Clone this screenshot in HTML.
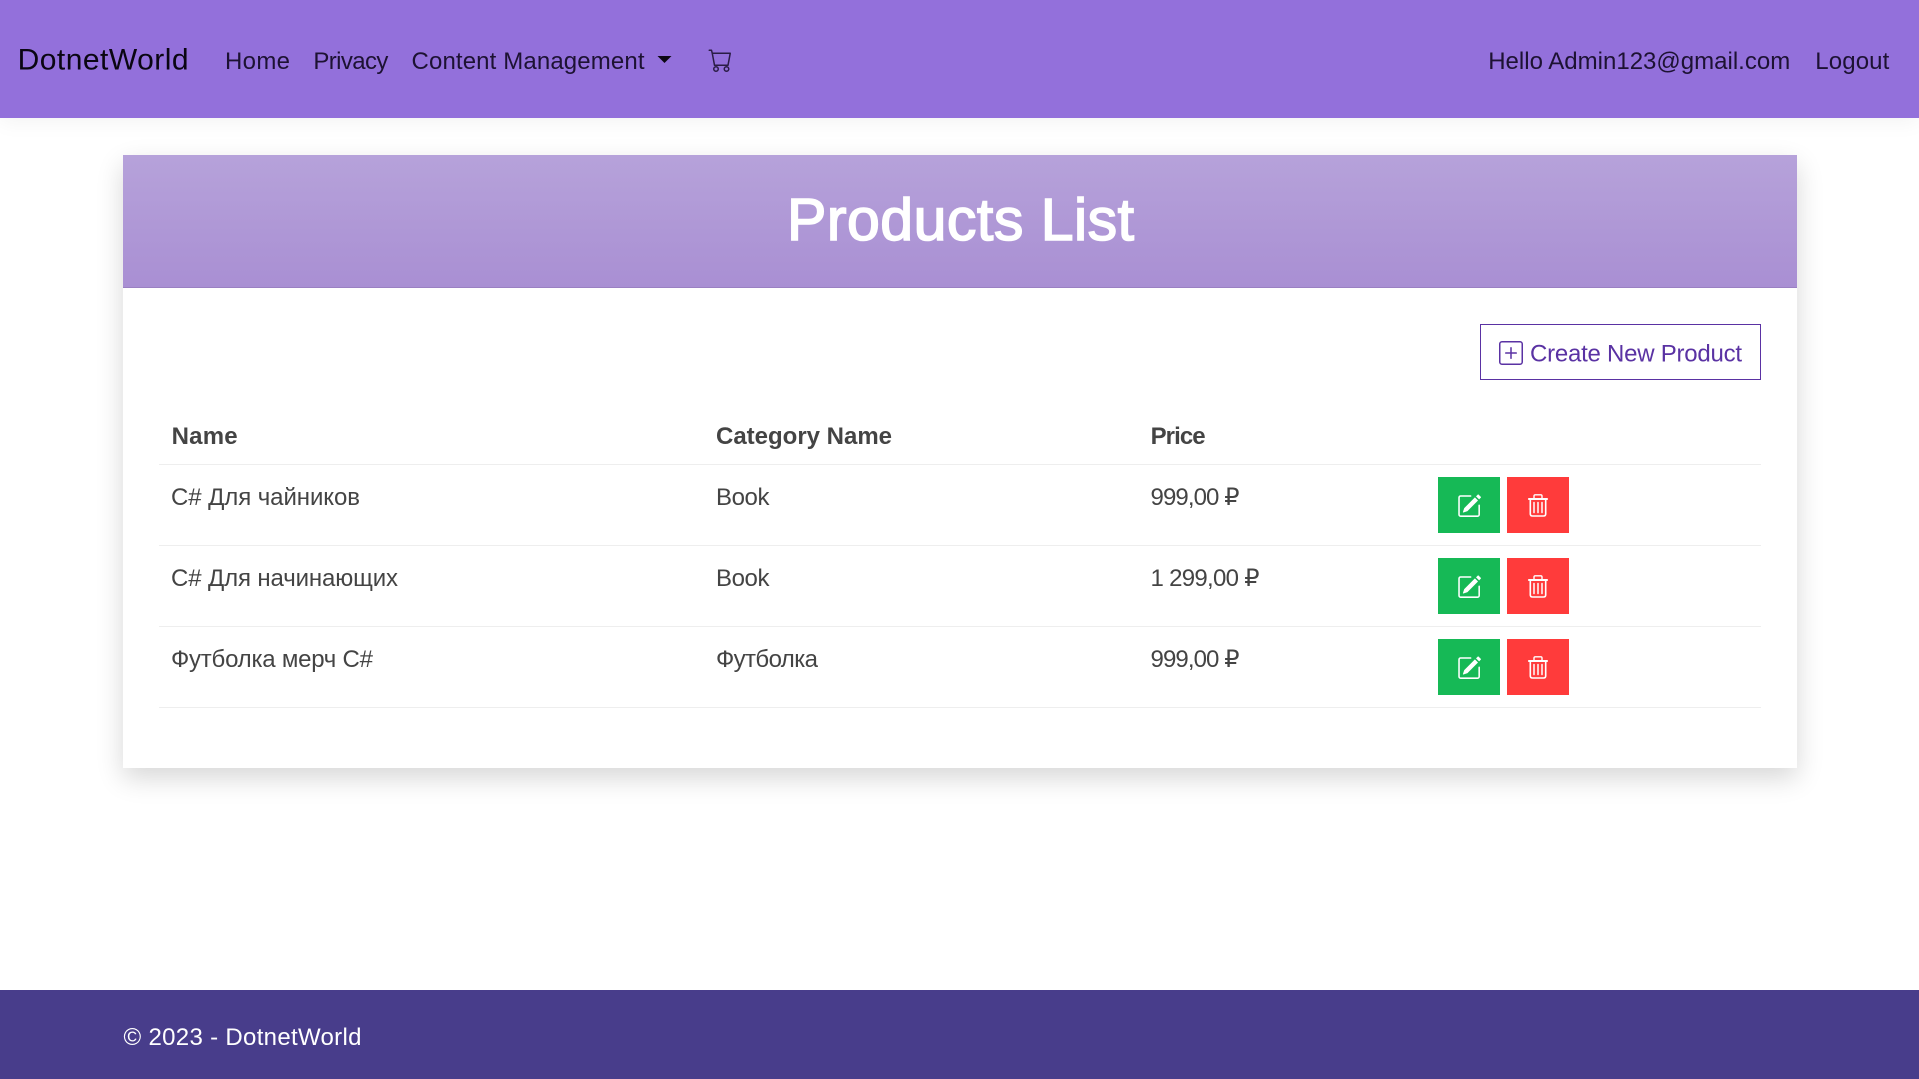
<!DOCTYPE html>
<html lang="ru">
<head>
<meta charset="utf-8">
<title>Products List - DotnetWorld</title>
<style>
html,body{margin:0;padding:0;width:1919px;height:1079px;overflow:hidden;background:#fff}
.abs{position:absolute}
#nav{left:0;top:0;width:1919px;height:118px;background:#9370db;box-shadow:0 4px 20px rgba(0,0,0,.05)}
#card{left:123px;top:155px;width:1674px;height:613px;background:#fff;box-shadow:0 10px 25px rgba(0,0,0,.16)}
#head{left:123px;top:155px;width:1674px;height:132px;background:linear-gradient(180deg,#b6a2da,#a98fd3);border-bottom:1px solid #9a80c2}
#foot{left:0;top:990px;width:1919px;height:89px;background:#483d8b}
.line{left:159px;width:1602px;height:1px;background:#eeeeee}
.btn{width:62px;height:56px}
.g{background:#16b956;left:1438px}
.r{background:#ff3b3b;left:1507px}
#create{left:1480px;top:324px;width:279px;height:54px;border:1px solid #5a32a3}
svg{position:absolute;left:0;top:0}
text{font-family:"Liberation Sans","DejaVu Sans",sans-serif;font-size:24px;fill:#444}
.n{fill:#1d1233}
.b{font-weight:700}
.tr{fill:none;stroke:#fff;stroke-linecap:round}
</style>
</head>
<body>
<div id="nav" class="abs"></div>
<div id="card" class="abs"></div>
<div id="head" class="abs"></div>
<div id="create" class="abs"></div>
<div class="abs line" style="top:464px"></div>
<div class="abs line" style="top:545px"></div>
<div class="abs line" style="top:626px"></div>
<div class="abs line" style="top:707px"></div>
<div class="abs btn g" style="top:477px"></div>
<div class="abs btn r" style="top:477px"></div>
<div class="abs btn g" style="top:558px"></div>
<div class="abs btn r" style="top:558px"></div>
<div class="abs btn g" style="top:639px"></div>
<div class="abs btn r" style="top:639px"></div>
<div id="foot" class="abs"></div>

<svg width="1919" height="1079" viewBox="0 0 1919 1079" xmlns="http://www.w3.org/2000/svg">
  <!-- nav -->
  <text x="17.6" y="69.5" style="font-size:30px;fill:#0a0612" textLength="171">DotnetWorld</text>
  <text class="n" x="225" y="69" textLength="65">Home</text>
  <text class="n" x="313.4" y="69" textLength="75">Privacy</text>
  <text class="n" x="411.5" y="69" textLength="233">Content Management</text>
  <polygon points="657.5,56 671.5,56 664.5,63" fill="#0c0814"/>
  <g transform="translate(708.5,48) scale(1.5)" fill="#2a1c45">
    <path d="M0 1.5A.5.5 0 0 1 .5 1H2a.5.5 0 0 1 .485.379L2.89 3H14.5a.5.5 0 0 1 .491.592l-1.5 8A.5.5 0 0 1 13 12H4a.5.5 0 0 1-.491-.408L2.01 3.607 1.61 2H.5a.5.5 0 0 1-.5-.5zM3.102 4l1.313 7h8.17l1.313-7H3.102zM5 12a2 2 0 1 0 0 4 2 2 0 0 0 0-4zm7 0a2 2 0 1 0 0 4 2 2 0 0 0 0-4zm-7 1a1 1 0 1 1 0 2 1 1 0 0 1 0-2zm7 0a1 1 0 1 1 0 2 1 1 0 0 1 0-2z"/>
  </g>
  <text class="n" x="1488.2" y="69" textLength="302">Hello Admin123@gmail.com</text>
  <text class="n" x="1815.3" y="69" textLength="74">Logout</text>

  <!-- title -->
  <text x="787" y="240" textLength="347" style="font-size:59px;fill:#fff;stroke:#fff;stroke-width:1.6px">Products List</text>

  <!-- create -->
  <g transform="translate(1499,341) scale(1.5)" fill="#5a32a3">
    <path d="M14 1a1 1 0 0 1 1 1v12a1 1 0 0 1-1 1H2a1 1 0 0 1-1-1V2a1 1 0 0 1 1-1h12zM2 0a2 2 0 0 0-2 2v12a2 2 0 0 0 2 2h12a2 2 0 0 0 2-2V2a2 2 0 0 0-2-2H2z"/>
    <path d="M8 4a.5.5 0 0 1 .5.5v3h3a.5.5 0 0 1 0 1h-3v3a.5.5 0 0 1-1 0v-3h-3a.5.5 0 0 1 0-1h3v-3A.5.5 0 0 1 8 4z"/>
  </g>
  <text x="1530" y="361.5" textLength="212" style="fill:#5a32a3">Create New Product</text>

  <!-- table head -->
  <text class="b" x="171.6" y="444" textLength="66">Name</text>
  <text class="b" x="716" y="444" textLength="176">Category Name</text>
  <text class="b" x="1150.6" y="444" textLength="55">Price</text>

  <!-- rows -->
  <text x="171" y="505" textLength="189">C# Для чайников</text>
  <text x="716" y="505" textLength="53.5">Book</text>
  <text x="1150.5" y="505" textLength="89">999,00 ₽</text>

  <text x="171" y="586" textLength="227">C# Для начинающих</text>
  <text x="716" y="586" textLength="53.5">Book</text>
  <text x="1150.5" y="586" textLength="109">1 299,00 ₽</text>

  <text x="171" y="667" textLength="202">Футболка мерч C#</text>
  <text x="716" y="667" textLength="102">Футболка</text>
  <text x="1150.5" y="667" textLength="89">999,00 ₽</text>

  <!-- edit icons -->
  <g fill="#fff">
    <g transform="translate(1456.7,493.7) scale(1.55)">
      <path d="M15.502 1.94a.5.5 0 0 1 0 .706L14.459 3.69l-2-2L13.502.646a.5.5 0 0 1 .707 0l1.293 1.293zm-1.75 2.456-2-2L4.939 9.21a.5.5 0 0 0-.121.196l-.805 2.414a.25.25 0 0 0 .316.316l2.414-.805a.5.5 0 0 0 .196-.12l6.813-6.814z"/>
      <path fill-rule="evenodd" d="M1 13.5A1.5 1.5 0 0 0 2.5 15h11a1.5 1.5 0 0 0 1.5-1.5v-6a.5.5 0 0 0-1 0v6a.5.5 0 0 1-.5.5h-11a.5.5 0 0 1-.5-.5v-11a.5.5 0 0 1 .5-.5H9a.5.5 0 0 0 0-1H2.5A1.5 1.5 0 0 0 1 2.5v11z"/>
    </g>
    <g transform="translate(1456.7,574.7) scale(1.55)">
      <path d="M15.502 1.94a.5.5 0 0 1 0 .706L14.459 3.69l-2-2L13.502.646a.5.5 0 0 1 .707 0l1.293 1.293zm-1.75 2.456-2-2L4.939 9.21a.5.5 0 0 0-.121.196l-.805 2.414a.25.25 0 0 0 .316.316l2.414-.805a.5.5 0 0 0 .196-.12l6.813-6.814z"/>
      <path fill-rule="evenodd" d="M1 13.5A1.5 1.5 0 0 0 2.5 15h11a1.5 1.5 0 0 0 1.5-1.5v-6a.5.5 0 0 0-1 0v6a.5.5 0 0 1-.5.5h-11a.5.5 0 0 1-.5-.5v-11a.5.5 0 0 1 .5-.5H9a.5.5 0 0 0 0-1H2.5A1.5 1.5 0 0 0 1 2.5v11z"/>
    </g>
    <g transform="translate(1456.7,655.7) scale(1.55)">
      <path d="M15.502 1.94a.5.5 0 0 1 0 .706L14.459 3.69l-2-2L13.502.646a.5.5 0 0 1 .707 0l1.293 1.293zm-1.75 2.456-2-2L4.939 9.21a.5.5 0 0 0-.121.196l-.805 2.414a.25.25 0 0 0 .316.316l2.414-.805a.5.5 0 0 0 .196-.12l6.813-6.814z"/>
      <path fill-rule="evenodd" d="M1 13.5A1.5 1.5 0 0 0 2.5 15h11a1.5 1.5 0 0 0 1.5-1.5v-6a.5.5 0 0 0-1 0v6a.5.5 0 0 1-.5.5h-11a.5.5 0 0 1-.5-.5v-11a.5.5 0 0 1 .5-.5H9a.5.5 0 0 0 0-1H2.5A1.5 1.5 0 0 0 1 2.5v11z"/>
    </g>
  </g>
  <!-- trash icons -->
  <g transform="translate(1528,494)">
    <path class="tr" stroke-width="1.9" d="M.9 5H19.1"/>
    <path class="tr" stroke-width="1.4" d="M6 4V2Q6 .8 7.2 .8H12.8Q14 .8 14 2V4"/>
    <path class="tr" stroke-width="1.6" d="M2.3 6V20Q2.3 22 4.6 22H15.4Q17.7 22 17.7 20V6"/>
    <path class="tr" stroke-width="1.5" d="M6 8.5V18.5M10 8.5V18.5M14 8.5V18.5"/>
  </g>
  <g transform="translate(1528,575)">
    <path class="tr" stroke-width="1.9" d="M.9 5H19.1"/>
    <path class="tr" stroke-width="1.4" d="M6 4V2Q6 .8 7.2 .8H12.8Q14 .8 14 2V4"/>
    <path class="tr" stroke-width="1.6" d="M2.3 6V20Q2.3 22 4.6 22H15.4Q17.7 22 17.7 20V6"/>
    <path class="tr" stroke-width="1.5" d="M6 8.5V18.5M10 8.5V18.5M14 8.5V18.5"/>
  </g>
  <g transform="translate(1528,656)">
    <path class="tr" stroke-width="1.9" d="M.9 5H19.1"/>
    <path class="tr" stroke-width="1.4" d="M6 4V2Q6 .8 7.2 .8H12.8Q14 .8 14 2V4"/>
    <path class="tr" stroke-width="1.6" d="M2.3 6V20Q2.3 22 4.6 22H15.4Q17.7 22 17.7 20V6"/>
    <path class="tr" stroke-width="1.5" d="M6 8.5V18.5M10 8.5V18.5M14 8.5V18.5"/>
  </g>

  <!-- footer -->
  <text x="123.5" y="1045" textLength="238" style="fill:#fff">© 2023 - DotnetWorld</text>
</svg>
</body>
</html>
